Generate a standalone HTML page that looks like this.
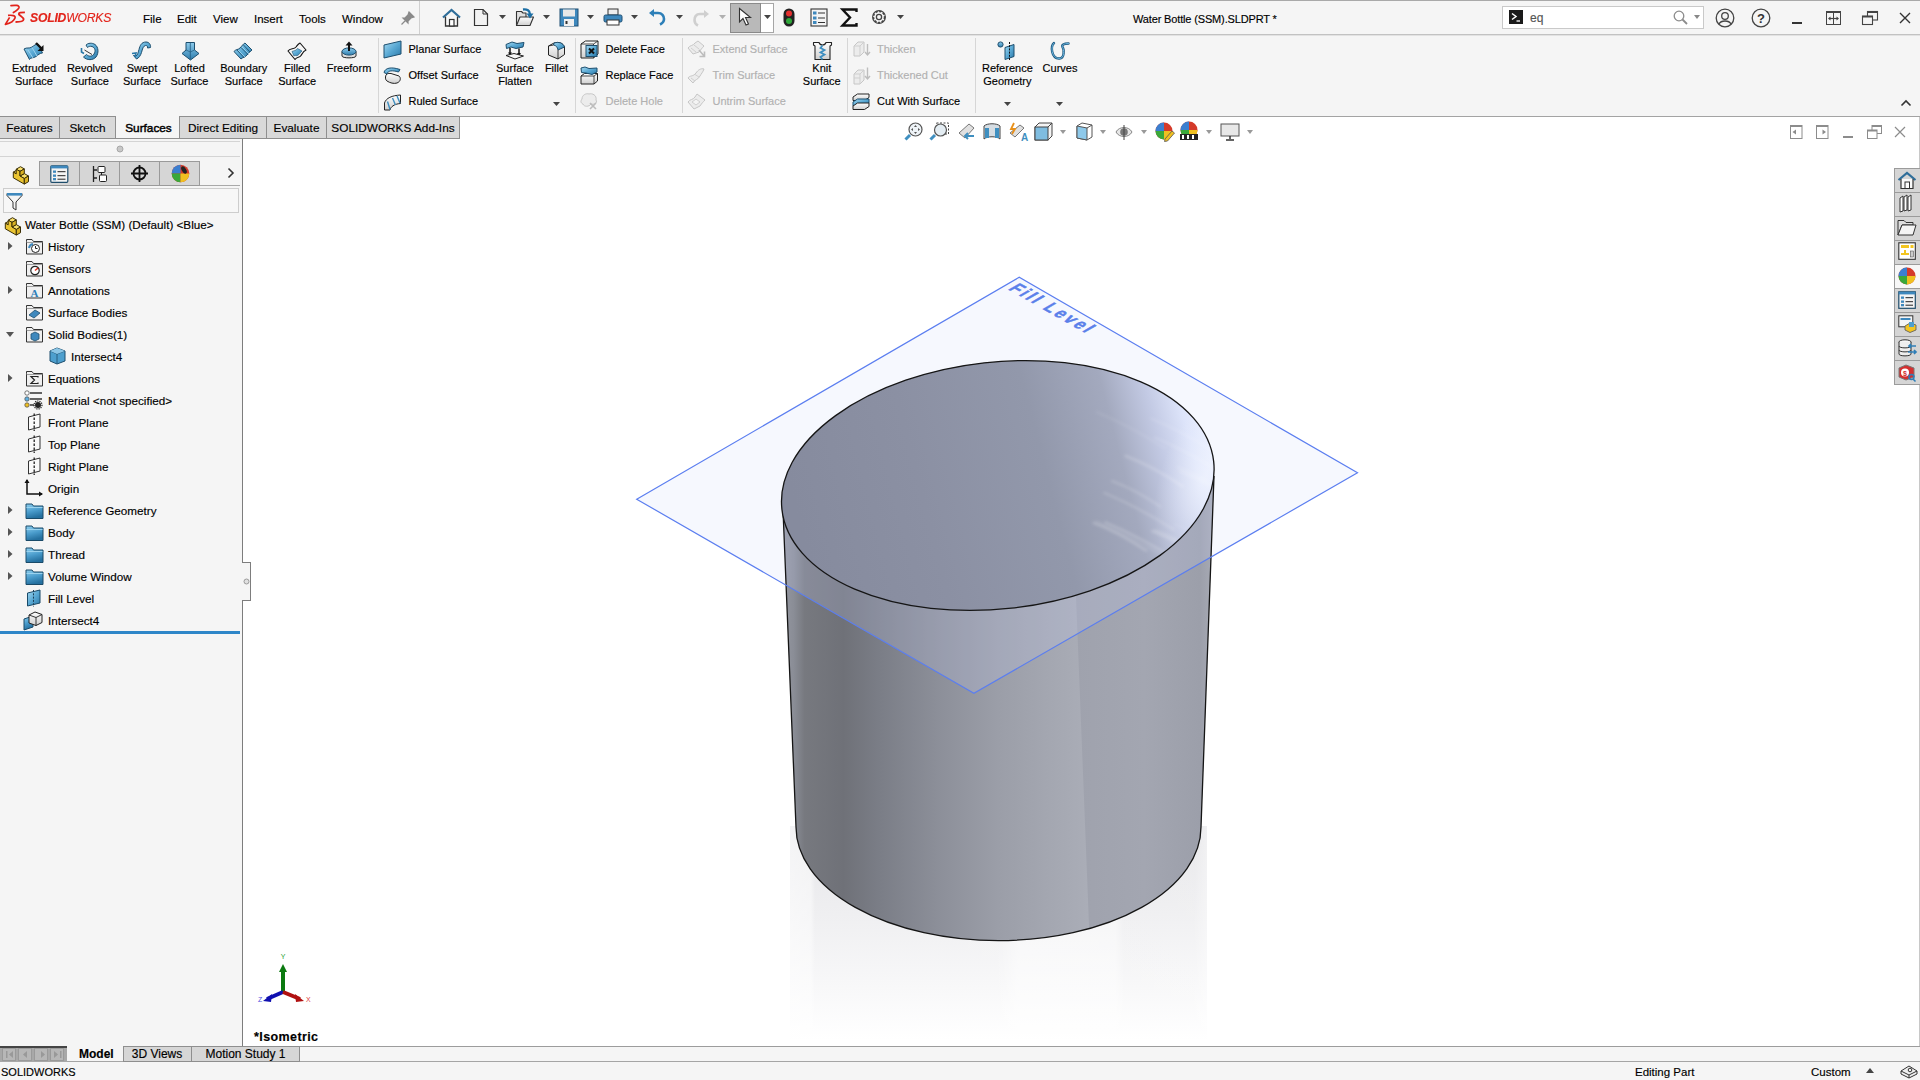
<!DOCTYPE html>
<html><head><meta charset="utf-8">
<style>
*{box-sizing:border-box}
html,body{margin:0;padding:0;width:1920px;height:1080px;overflow:hidden;background:#fff;font-family:"Liberation Sans",sans-serif;color:#000}
.a{position:absolute}
.t{position:absolute;white-space:nowrap;-webkit-text-stroke:0.15px currentColor}
svg{overflow:visible}
</style></head><body>


<svg class="a" style="left:0;top:0" width="1920" height="1080" viewBox="0 0 1920 1080">
<defs>
<linearGradient id="gBody" gradientUnits="userSpaceOnUse" x1="783" y1="0" x2="1214" y2="0">
<stop offset="0" stop-color="#9497a0"/>
<stop offset="0.025" stop-color="#8a8d96"/>
<stop offset="0.05" stop-color="#77797f"/>
<stop offset="0.14" stop-color="#6f7178"/>
<stop offset="0.22" stop-color="#7a7d86"/>
<stop offset="0.36" stop-color="#8c8f99"/>
<stop offset="0.50" stop-color="#9b9ea8"/>
<stop offset="0.62" stop-color="#a4a7b1"/>
<stop offset="0.72" stop-color="#abaeb8"/>
<stop offset="1" stop-color="#abaeb8"/>
</linearGradient>
<linearGradient id="gBodyR" gradientUnits="userSpaceOnUse" x1="1075" y1="0" x2="1214" y2="0">
<stop offset="0" stop-color="#9fa2ad"/>
<stop offset="0.5" stop-color="#a3a6b1"/>
<stop offset="0.9" stop-color="#9c9faa"/>
<stop offset="1" stop-color="#a8abb5"/>
</linearGradient>
<linearGradient id="gTop" gradientUnits="userSpaceOnUse" x1="800" y1="525" x2="1215" y2="465">
<stop offset="0" stop-color="#868b9e"/>
<stop offset="0.3" stop-color="#8b90a3"/>
<stop offset="0.6" stop-color="#9298ab"/>
<stop offset="0.78" stop-color="#a3a9be"/>
<stop offset="0.88" stop-color="#c3cae4"/>
<stop offset="0.95" stop-color="#dde4fa"/>
<stop offset="1" stop-color="#e9eefe"/>
</linearGradient>
<radialGradient id="gHi" gradientUnits="userSpaceOnUse" cx="1205" cy="500" r="90" gradientTransform="translate(1205 500) rotate(25) scale(0.5 1) translate(-1205 -500)">
<stop offset="0" stop-color="#f4f7ff" stop-opacity="0.6"/>
<stop offset="1" stop-color="#eef2ff" stop-opacity="0"/>
</radialGradient>
<linearGradient id="gShadow" gradientUnits="userSpaceOnUse" x1="0" y1="830" x2="0" y2="1040">
<stop offset="0" stop-color="#e6e6e9"/>
<stop offset="0.4" stop-color="#efeff1"/>
<stop offset="0.75" stop-color="#f8f8f9"/>
<stop offset="1" stop-color="#ffffff"/>
</linearGradient>
<linearGradient id="gShadowX" gradientUnits="userSpaceOnUse" x1="790" y1="0" x2="1207" y2="0">
<stop offset="0" stop-color="#fff" stop-opacity="0.55"/>
<stop offset="0.05" stop-color="#fff" stop-opacity="0.45"/>
<stop offset="0.06" stop-color="#fff" stop-opacity="0"/>
<stop offset="0.5" stop-color="#fff" stop-opacity="0.05"/>
<stop offset="0.55" stop-color="#fff" stop-opacity="0.5"/>
<stop offset="0.78" stop-color="#fff" stop-opacity="0.45"/>
<stop offset="0.8" stop-color="#fff" stop-opacity="0.05"/>
<stop offset="0.97" stop-color="#fff" stop-opacity="0.1"/>
<stop offset="1" stop-color="#fff" stop-opacity="0.4"/>
</linearGradient>
<clipPath id="cBody"><path d="M783 510 L796 827 A202.5 113.6 0 0 0 1201 827 L1214 476 Z"/></clipPath>
<clipPath id="cTop"><ellipse cx="997.8" cy="485.5" rx="216" ry="122" transform="rotate(-6.3 997.8 485.5)"/></clipPath>
<filter id="fBlur" x="-20%" y="-20%" width="140%" height="140%"><feGaussianBlur stdDeviation="1.6"/></filter>
</defs>
<rect x="790" y="826" width="417" height="214" fill="url(#gShadow)"/>
<rect x="790" y="826" width="417" height="214" fill="url(#gShadowX)"/>
<polygon points="636.7,499.2 1019.2,277.3 1357.5,472.8 973.9,693.3" fill="#f6f8fe"/>
<g clip-path="url(#cBody)">
<rect x="780" y="470" width="440" height="480" fill="url(#gBody)"/>
<polygon points="1071,470 1220,470 1220,950 1090,950" fill="url(#gBodyR)"/>
<polygon points="636.7,499.2 1019.2,277.3 1357.5,472.8 973.9,693.3" fill="#c4cef4" fill-opacity="0.22"/>
</g>
<path d="M783 510 L796 827 A202.5 113.6 0 0 0 1201 827 L1214 476" fill="none" stroke="#151515" stroke-width="1.3"/>
<polygon points="636.7,499.2 1019.2,277.3 1357.5,472.8 973.9,693.3" fill="none" stroke="#5b7ef0" stroke-width="1.2"/>
<ellipse cx="997.8" cy="485.5" rx="217.2" ry="123.4" transform="rotate(-6.3 997.8 485.5)" fill="url(#gTop)" stroke="#151515" stroke-width="1.3"/>
<ellipse cx="997.8" cy="485.5" rx="216" ry="122" transform="rotate(-6.3 997.8 485.5)" fill="url(#gHi)"/>
<g clip-path="url(#cTop)"><g filter="url(#fBlur)"><path d="M1111.4 480.7 Q1136.3 489.9 1161.1 507.1" stroke="#ffffff" stroke-opacity="0.23" stroke-width="1.7" fill="none"/><path d="M1095.9 411.7 Q1130.7 426.1 1165.5 448.6" stroke="#ffffff" stroke-opacity="0.17" stroke-width="1.1" fill="none"/><path d="M1179.6 471.1 Q1214.4 485.5 1249.2 508.0" stroke="#ffffff" stroke-opacity="0.21" stroke-width="1.7" fill="none"/><path d="M1103.6 492.5 Q1139.0 507.3 1174.4 530.1" stroke="#ffffff" stroke-opacity="0.21" stroke-width="1.8" fill="none"/><path d="M1150.4 418.3 Q1183.5 431.9 1216.7 453.4" stroke="#ffffff" stroke-opacity="0.23" stroke-width="1.2" fill="none"/><path d="M1092.8 522.5 Q1119.8 532.8 1146.9 551.2" stroke="#ffffff" stroke-opacity="0.25" stroke-width="2.0" fill="none"/><path d="M1154.3 529.7 Q1179.7 539.2 1205.1 556.6" stroke="#ffffff" stroke-opacity="0.26" stroke-width="1.4" fill="none"/><path d="M1174.2 524.3 Q1193.3 530.3 1212.3 544.4" stroke="#ffffff" stroke-opacity="0.14" stroke-width="1.1" fill="none"/><path d="M1176.9 466.7 Q1207.2 478.8 1237.5 498.8" stroke="#ffffff" stroke-opacity="0.17" stroke-width="1.5" fill="none"/><path d="M1124.7 455.6 Q1154.2 467.2 1183.6 486.8" stroke="#ffffff" stroke-opacity="0.23" stroke-width="2.1" fill="none"/><path d="M1151.4 530.8 Q1186.6 545.4 1221.8 568.0" stroke="#ffffff" stroke-opacity="0.30" stroke-width="1.7" fill="none"/><path d="M1104.7 521.9 Q1142.2 537.7 1179.7 561.6" stroke="#ffffff" stroke-opacity="0.28" stroke-width="1.6" fill="none"/><path d="M1154.2 437.4 Q1188.9 451.8 1223.6 474.2" stroke="#ffffff" stroke-opacity="0.22" stroke-width="1.2" fill="none"/><path d="M1095.7 521.0 Q1133.7 537.1 1171.8 561.3" stroke="#ffffff" stroke-opacity="0.14" stroke-width="1.9" fill="none"/></g></g>
<text transform="matrix(0.8706 0.4915 -1.06 0.612 1007.6 289.2)" font-family="Liberation Sans" font-size="15.6" font-weight="bold" fill="#5b80ea" stroke="#5b80ea" stroke-width="0.45" letter-spacing="2.5">Fill Level</text>
</svg>

<div class="a" style="left:0px;top:0px;width:1920px;height:35px;background:#f5f5f5;border-top:1px solid #a9a9a9;border-bottom:1px solid #c2c2c2"></div>
<svg class="a" style="left:0px;top:0px" width="32" height="28" viewBox="0 0 32 28"><path d="M11 5.6 C15 5.2 19.5 5 19 7.5 C18.5 9.5 16 11 13.4 12.5" fill="none" stroke="#e2231a" stroke-width="1.7" stroke-linecap="round"/><path d="M8 15.4 C12 15 16 15.5 15 18 C14 21 9 23.5 5.4 24.4 L9.6 17.4" fill="none" stroke="#e2231a" stroke-width="1.7" stroke-linejoin="round"/><path d="M24.9 12.4 C21 12.4 18.6 12.6 18.8 14 C19 15.5 23.8 17 23.6 19.5 C23.4 21.8 19 22 15.5 22" fill="none" stroke="#e2231a" stroke-width="1.8"/></svg>
<div class="t" style="left:30px;top:11.3px;font-size:12.6px;line-height:14px;color:#e2231a;font-style:italic;letter-spacing:-0.2px;transform:scaleX(0.965);transform-origin:0 0"><b>SOLID</b>WORKS</div>
<div class="t" style="left:143px;top:13.31px;font-size:11.5px;line-height:13.22px;color:#000;font-weight:normal;">File</div>
<div class="t" style="left:177px;top:13.31px;font-size:11.5px;line-height:13.22px;color:#000;font-weight:normal;">Edit</div>
<div class="t" style="left:213px;top:13.31px;font-size:11.5px;line-height:13.22px;color:#000;font-weight:normal;">View</div>
<div class="t" style="left:254px;top:13.31px;font-size:11.5px;line-height:13.22px;color:#000;font-weight:normal;">Insert</div>
<div class="t" style="left:299px;top:13.31px;font-size:11.5px;line-height:13.22px;color:#000;font-weight:normal;">Tools</div>
<div class="t" style="left:342px;top:13.31px;font-size:11.5px;line-height:13.22px;color:#000;font-weight:normal;">Window</div>
<svg class="a" style="left:400px;top:10px" width="16" height="16" viewBox="0 0 16 16"><path d="M9 2 L14 7 L11 8 L8 11 L8 13 L3 8 L5 8 L8 5 Z M5.5 10.5 L1.5 14.5" fill="#8a8a8a" stroke="#8a8a8a" stroke-width="1.2"/></svg>
<div class="a" style="left:419px;top:1px;width:1px;height:33px;background:#d0d0d0"></div>
<svg class="a" style="left:441px;top:8px" width="21" height="20" viewBox="0 0 21 20"><path d="M2 9.5 L10.5 2 L19 9.5" fill="none" stroke="#2f6e9a" stroke-width="2.2"/><path d="M4.5 8.5 V18 H16.5 V8.5" fill="#f8f8f8" stroke="#333" stroke-width="1.3"/><rect x="8.5" y="11.5" width="4.5" height="6.5" fill="#fff" stroke="#333" stroke-width="1.2"/></svg>
<svg class="a" style="left:473px;top:8px" width="16" height="19" viewBox="0 0 16 19"><path d="M1.5 1.5 H10 L14.5 6 V17.5 H1.5 Z" fill="#f2f2f2" stroke="#333" stroke-width="1.2"/><path d="M10 1.5 V6 H14.5" fill="none" stroke="#333" stroke-width="1"/></svg>
<svg class="a" style="left:499.0px;top:15px" width="7" height="4" viewBox="0 0 7 4"><polygon points="0,0 7,0 3.5,4" fill="#444"/></svg>
<svg class="a" style="left:515px;top:8px" width="20" height="19" viewBox="0 0 20 19"><path d="M1.5 3.5 H6.5 L8 5 H11 V17.5 H1.5 Z" fill="#e0e0e0" stroke="#333" stroke-width="1.1" stroke-linejoin="round"/><path d="M5 9 H18.5 L15 17.5 H1.5 Z" fill="url(#gw)" stroke="#333" stroke-width="1.1" stroke-linejoin="round"/><path d="M8 1.5 C12 1 15 2.5 15 6.5" fill="none" stroke="#1d6fa5" stroke-width="2.4"/><polygon points="11.5,5.5 18.5,5.5 15,10.5" fill="#1d6fa5"/></svg>
<svg class="a" style="left:542.5px;top:15px" width="7" height="4" viewBox="0 0 7 4"><polygon points="0,0 7,0 3.5,4" fill="#444"/></svg>
<svg class="a" style="left:559px;top:8px" width="20" height="19" viewBox="0 0 20 19"><rect x="1" y="1" width="18" height="17" fill="#3e88bd" stroke="#1f4f73" stroke-width="1"/><rect x="4" y="1.5" width="12" height="7" fill="#e8e8e8"/><rect x="5" y="11" width="10" height="7" fill="#f0f0f0"/><rect x="6.5" y="13" width="2" height="3" fill="#333"/></svg>
<svg class="a" style="left:587.0px;top:15px" width="7" height="4" viewBox="0 0 7 4"><polygon points="0,0 7,0 3.5,4" fill="#444"/></svg>
<svg class="a" style="left:603px;top:8px" width="20" height="19" viewBox="0 0 20 19"><rect x="5" y="1" width="10" height="6" fill="#eee" stroke="#333"/><rect x="1" y="7" width="18" height="7" rx="1.5" fill="#3e88bd" stroke="#1f4f73"/><rect x="4" y="12" width="12" height="5" fill="#fff" stroke="#333"/></svg>
<svg class="a" style="left:630.5px;top:15px" width="7" height="4" viewBox="0 0 7 4"><polygon points="0,0 7,0 3.5,4" fill="#444"/></svg>
<svg class="a" style="left:648px;top:8px" width="18" height="18" viewBox="0 0 18 18"><path d="M4 5 H10 C14 5 16 8 16 11 C16 14 14 15.5 12 16.5" fill="none" stroke="#2d7fb8" stroke-width="2.6"/><polygon points="1,5 6,1 6,9" fill="#2d7fb8"/></svg>
<svg class="a" style="left:675.5px;top:15px" width="7" height="4" viewBox="0 0 7 4"><polygon points="0,0 7,0 3.5,4" fill="#444"/></svg>
<svg class="a" style="left:693px;top:9px" width="17" height="17" viewBox="0 0 17 17"><path d="M13 5 H7 C3 5 1.5 8 1.5 11 C1.5 14 3 15.5 5 16.5" fill="none" stroke="#cfcfcf" stroke-width="2.6"/><polygon points="16,5 11,1 11,9" fill="#cfcfcf"/></svg>
<svg class="a" style="left:719.0px;top:15px" width="7" height="4" viewBox="0 0 7 4"><polygon points="0,0 7,0 3.5,4" fill="#b0b0b0"/></svg>
<div class="a" style="left:730px;top:3px;width:44px;height:30px;background:#fff;border:1px solid #a6a6a6"></div>
<div class="a" style="left:730px;top:3px;width:31px;height:30px;background:#b9b9b9;border:1px solid #8a8a8a"></div>
<svg class="a" style="left:738px;top:7px" width="14" height="20" viewBox="0 0 14 20"><path d="M1.5 1.5 L1.5 15 L5 11.5 L8 18 L10.5 17 L7.5 10.5 L12.5 10.5 Z" fill="#fff" stroke="#333" stroke-width="1.1"/></svg>
<svg class="a" style="left:763.5px;top:15px" width="7" height="4" viewBox="0 0 7 4"><polygon points="0,0 7,0 3.5,4" fill="#444"/></svg>
<svg class="a" style="left:783px;top:8px" width="12" height="19" viewBox="0 0 12 19"><rect x="0.5" y="0.5" width="11" height="18" rx="5.5" fill="#222"/><circle cx="6" cy="5.5" r="3" fill="#e53030"/><circle cx="6" cy="13" r="3" fill="#2fa83a"/></svg>
<svg class="a" style="left:810px;top:8px" width="18" height="19" viewBox="0 0 18 19"><rect x="1" y="1" width="16" height="17" fill="#f4f4f4" stroke="#333" stroke-width="1.1"/><rect x="3" y="3.5" width="3.5" height="3" fill="#3e88bd"/><rect x="3" y="8.5" width="3.5" height="3" fill="#3e88bd"/><rect x="3" y="13" width="3.5" height="3" fill="#3e88bd"/><path d="M8 5 H15 M8 10 H15 M8 14.5 H15" stroke="#333" stroke-width="1.2"/></svg>
<svg class="a" style="left:841px;top:8px" width="17" height="19" viewBox="0 0 17 19"><path d="M15.5 4 V1.5 H1.5 L9 9.5 L1.5 17.5 H15.5 V15" fill="none" stroke="#111" stroke-width="2.4"/></svg>
<svg class="a" style="left:870px;top:8px" width="18" height="18" viewBox="0 0 18 18"><circle cx="9" cy="9" r="5.6" fill="none" stroke="#444" stroke-width="1.6" stroke-dasharray="2.2 1.5"/><circle cx="9" cy="9" r="6.4" fill="none" stroke="#444" stroke-width="1.1"/><circle cx="9" cy="9" r="2.6" fill="none" stroke="#444" stroke-width="1.3"/></svg>
<svg class="a" style="left:896.5px;top:15px" width="7" height="4" viewBox="0 0 7 4"><polygon points="0,0 7,0 3.5,4" fill="#444"/></svg>
<div class="t" style="left:1133px;top:13.06px;font-size:11px;line-height:12.65px;color:#000;font-weight:normal;letter-spacing:-0.15px">Water Bottle (SSM).SLDPRT *</div>
<div class="a" style="left:1502px;top:6px;width:202px;height:23px;background:#fff;border:1px solid #c9c9c9"></div>
<svg class="a" style="left:1509px;top:10px" width="14" height="14" viewBox="0 0 14 14"><rect width="14" height="14" fill="#1a1a1a"/><path d="M3 3.5 L7 6.5 L3 9.5" fill="none" stroke="#fff" stroke-width="1.5"/><path d="M7.5 11 H11" stroke="#fff" stroke-width="1.3"/></svg>
<div class="t" style="left:1530px;top:12.14px;font-size:12px;line-height:13.8px;color:#555;font-weight:normal;">eq</div>
<svg class="a" style="left:1673px;top:10px" width="15" height="15" viewBox="0 0 15 15"><circle cx="6" cy="6" r="4.8" fill="none" stroke="#8c8c8c" stroke-width="1.3"/><path d="M9.5 9.5 L14 14" stroke="#8c8c8c" stroke-width="1.8"/></svg>
<svg class="a" style="left:1694.0px;top:15px" width="6" height="4" viewBox="0 0 6 4"><polygon points="0,0 6,0 3.0,4" fill="#888"/></svg>
<svg class="a" style="left:1715px;top:8px" width="20" height="20" viewBox="0 0 20 20"><circle cx="10" cy="10" r="8.8" fill="none" stroke="#444" stroke-width="1.3"/><circle cx="10" cy="8" r="3.3" fill="none" stroke="#444" stroke-width="1.3"/><path d="M4 16 C6 12 14 12 16 16" fill="none" stroke="#444" stroke-width="1.3"/></svg>
<svg class="a" style="left:1751px;top:8px" width="20" height="20" viewBox="0 0 20 20"><circle cx="10" cy="10" r="8.8" fill="none" stroke="#444" stroke-width="1.3"/><text x="10" y="14.5" text-anchor="middle" font-family="Liberation Sans" font-size="13" font-weight="bold" fill="#333">?</text></svg>
<div class="a" style="left:1792px;top:22px;width:10px;height:2px;background:#333"></div>
<svg class="a" style="left:1826px;top:11px" width="15" height="14" viewBox="0 0 15 14"><rect x="0.5" y="0.5" width="14" height="13" fill="none" stroke="#444" stroke-width="1"/><rect x="0.5" y="0.5" width="14" height="1.5" fill="#444"/><path d="M7.5 2 V13.5" stroke="#444"/><path d="M3 7.5 H12" stroke="#444" stroke-width="1.2"/><polygon points="2,7.5 4.5,5.5 4.5,9.5" fill="#444"/><polygon points="13,7.5 10.5,5.5 10.5,9.5" fill="#444"/></svg>
<svg class="a" style="left:1862px;top:11px" width="16" height="14" viewBox="0 0 16 14"><rect x="5.5" y="0.5" width="10" height="8.5" fill="none" stroke="#444" stroke-width="1.1"/><rect x="5.5" y="0.5" width="10" height="1.5" fill="#444"/><rect x="0.5" y="5" width="10" height="8.5" fill="#f5f5f5" stroke="#444" stroke-width="1.1"/><rect x="0.5" y="5" width="10" height="1.5" fill="#444"/></svg>
<svg class="a" style="left:1899px;top:12px" width="12" height="12" viewBox="0 0 12 12"><path d="M1 1 L11 11 M11 1 L1 11" stroke="#333" stroke-width="1.4"/></svg>
<div class="a" style="left:0px;top:35px;width:1920px;height:82px;background:#f5f5f5;border-top:1px solid #e2e2e2;border-bottom:1px solid #a3a3a3"></div>
<div class="a" style="left:116px;top:116px;width:66px;height:23px;background:#f5f5f5"></div>
<div class="a" style="left:378px;top:38px;width:1px;height:75px;background:#d6d6d6"></div>
<div class="a" style="left:575px;top:38px;width:1px;height:75px;background:#d6d6d6"></div>
<div class="a" style="left:682px;top:38px;width:1px;height:75px;background:#d6d6d6"></div>
<div class="a" style="left:847px;top:38px;width:1px;height:75px;background:#d6d6d6"></div>
<div class="a" style="left:975px;top:38px;width:1px;height:75px;background:#d6d6d6"></div>
<div class="t" style="left:-66px;width:200px;text-align:center;top:62.36px;font-size:11px;line-height:12.65px;color:#000;font-weight:normal;">Extruded</div>
<div class="t" style="left:-66px;width:200px;text-align:center;top:75.46px;font-size:11px;line-height:12.65px;color:#000;font-weight:normal;">Surface</div>
<div class="t" style="left:-10.200000000000003px;width:200px;text-align:center;top:62.36px;font-size:11px;line-height:12.65px;color:#000;font-weight:normal;">Revolved</div>
<div class="t" style="left:-10.200000000000003px;width:200px;text-align:center;top:75.46px;font-size:11px;line-height:12.65px;color:#000;font-weight:normal;">Surface</div>
<div class="t" style="left:42px;width:200px;text-align:center;top:62.36px;font-size:11px;line-height:12.65px;color:#000;font-weight:normal;">Swept</div>
<div class="t" style="left:42px;width:200px;text-align:center;top:75.46px;font-size:11px;line-height:12.65px;color:#000;font-weight:normal;">Surface</div>
<div class="t" style="left:89.5px;width:200px;text-align:center;top:62.36px;font-size:11px;line-height:12.65px;color:#000;font-weight:normal;">Lofted</div>
<div class="t" style="left:89.5px;width:200px;text-align:center;top:75.46px;font-size:11px;line-height:12.65px;color:#000;font-weight:normal;">Surface</div>
<div class="t" style="left:143.7px;width:200px;text-align:center;top:62.36px;font-size:11px;line-height:12.65px;color:#000;font-weight:normal;">Boundary</div>
<div class="t" style="left:143.7px;width:200px;text-align:center;top:75.46px;font-size:11px;line-height:12.65px;color:#000;font-weight:normal;">Surface</div>
<div class="t" style="left:197.2px;width:200px;text-align:center;top:62.36px;font-size:11px;line-height:12.65px;color:#000;font-weight:normal;">Filled</div>
<div class="t" style="left:197.2px;width:200px;text-align:center;top:75.46px;font-size:11px;line-height:12.65px;color:#000;font-weight:normal;">Surface</div>
<div class="t" style="left:249px;width:200px;text-align:center;top:62.36px;font-size:11px;line-height:12.65px;color:#000;font-weight:normal;">Freeform</div>
<div class="t" style="left:415px;width:200px;text-align:center;top:62.16px;font-size:11px;line-height:12.65px;color:#000;font-weight:normal;">Surface</div>
<div class="t" style="left:415px;width:200px;text-align:center;top:75.16px;font-size:11px;line-height:12.65px;color:#000;font-weight:normal;">Flatten</div>
<div class="t" style="left:456.5px;width:200px;text-align:center;top:62.16px;font-size:11px;line-height:12.65px;color:#000;font-weight:normal;">Fillet</div>
<div class="t" style="left:721.8px;width:200px;text-align:center;top:61.76px;font-size:11px;line-height:12.65px;color:#000;font-weight:normal;">Knit</div>
<div class="t" style="left:721.8px;width:200px;text-align:center;top:74.86px;font-size:11px;line-height:12.65px;color:#000;font-weight:normal;">Surface</div>
<div class="t" style="left:907.4px;width:200px;text-align:center;top:62.36px;font-size:11px;line-height:12.65px;color:#000;font-weight:normal;">Reference</div>
<div class="t" style="left:907.4px;width:200px;text-align:center;top:75.46px;font-size:11px;line-height:12.65px;color:#000;font-weight:normal;">Geometry</div>
<div class="t" style="left:960px;width:200px;text-align:center;top:62.36px;font-size:11px;line-height:12.65px;color:#000;font-weight:normal;">Curves</div>
<svg width="0" height="0" style="position:absolute"><defs><linearGradient id="gb" x1="0" y1="0" x2="1" y2="1"><stop offset="0" stop-color="#a6daf2"/><stop offset="0.5" stop-color="#5aa9d4"/><stop offset="1" stop-color="#2a78a8"/></linearGradient><linearGradient id="gb2" x1="0" y1="0" x2="0" y2="1"><stop offset="0" stop-color="#8ccbec"/><stop offset="1" stop-color="#2f7eae"/></linearGradient><linearGradient id="gw" x1="0" y1="0" x2="0" y2="1"><stop offset="0" stop-color="#ffffff"/><stop offset="1" stop-color="#cfcfcf"/></linearGradient></defs></svg>
<svg class="a" style="left:23px;top:41px" width="22" height="20" viewBox="0 0 22 20"><path d="M1 8 C4 6 6 8 9 6 C11 4.5 13 3 15 3 L19.5 12 C17 12 15 14 13 15.5 C10 17.5 8 16 6.5 18.5 Z" fill="url(#gb)" stroke="#1d4f6f" stroke-width="1" stroke-linejoin="round"/><path d="M5 9 L10 17 M9 6.5 L14 15" stroke="#9fd3ee" stroke-width="1"/><path d="M13 2 L18.5 7.5" stroke="#111" stroke-width="2.4"/><polygon points="20.5,4 20.5,10 14.5,10" fill="#111"/></svg>
<svg class="a" style="left:80px;top:42px" width="20" height="19" viewBox="0 0 20 19"><path d="M6 3 C8 1 12 0.5 15 2.5 C18.5 5 19 11 16 15 C13 18.5 7 18.5 3.5 15 L6.5 12.5 C9 15 12.5 14.5 14 12 C16 9 15 5.5 12 4.5 C10 4 8.5 4.5 7.5 5.5 Z" fill="url(#gb)" stroke="#1d4f6f" stroke-width="1" stroke-linejoin="round"/><path d="M1.5 6 L1.5 10 L4 11.5" fill="none" stroke="#2a78a8" stroke-width="1.6"/><path d="M4.5 8 L12 12.5" stroke="#222" stroke-width="0.9"/></svg>
<svg class="a" style="left:131px;top:41px" width="21" height="20" viewBox="0 0 21 20"><path d="M2.5 14.5 L5.5 18 C8 17 9.5 14.5 10.5 11.5 C11.5 8 12 5 14.5 4.5 C16 4.3 17 5.5 16.5 7 L19.5 6.5 C20 3.5 18 1 15 1 C10.5 1 9 4.5 8 8.5 C7 12 6.5 14 5 15 Z" fill="url(#gb)" stroke="#1d4f6f" stroke-width="1" stroke-linejoin="round"/><path d="M1 12.5 L5 12 L4 16" fill="none" stroke="#2a78a8" stroke-width="1.6"/></svg>
<svg class="a" style="left:181px;top:41px" width="19" height="20" viewBox="0 0 19 20"><path d="M5 1.5 L13.5 1.5 L13.5 9 L18 12.5 L9.5 19 L1 12.5 L5 9 Z" fill="url(#gb2)" stroke="#1d4f6f" stroke-width="1" stroke-linejoin="round"/><path d="M9.3 2 V18.5" stroke="#1f5a80" stroke-width="0.8"/><path d="M5 9 L9.3 11 L13.5 9" fill="none" stroke="#1f5a80" stroke-width="0.7"/></svg>
<svg class="a" style="left:233px;top:42px" width="20" height="18" viewBox="0 0 20 18"><path d="M1 9.5 C3 7 5 8 7 6 C9 4 10 2 12 1 L19 8 C17 9.5 15.5 11 14 13 C12 15.5 10 15 8 17 Z" fill="url(#gb)" stroke="#1d4f6f" stroke-width="1" stroke-linejoin="round"/><path d="M4 8 L11 15.5 M8 5.5 L15 12.5 M10.5 3 L17 10" stroke="#1d4f6f" stroke-width="0.9"/><path d="M5 8 L12 15 M9 5 L16 12" stroke="#a6daf2" stroke-width="0.8"/></svg>
<svg class="a" style="left:287px;top:42px" width="20" height="18" viewBox="0 0 20 18"><path d="M1 9 C3 6 7 7.5 9 5 C10.5 3 11 2 13 1 L19 8 C16.5 9 15.5 11 14 13.5 C12.5 16 10 14.5 8 17.5 Z" fill="#f6f6f6" stroke="#111" stroke-width="1.1" stroke-linejoin="round"/><path d="M5 9.5 C7 8.5 9 9 10.5 6.5 L15 9 C13 10.5 12.5 12.5 10.5 13.5 C9 14 8 13 7 14 Z" fill="url(#gb)" stroke="#1d4f6f" stroke-width="0.6"/></svg>
<svg class="a" style="left:341px;top:41px" width="16" height="20" viewBox="0 0 16 20"><path d="M1 10.5 V15 C1 17.5 15 17.5 15 15 V10.5" fill="url(#gw)" stroke="#222" stroke-width="1"/><ellipse cx="8" cy="10.5" rx="7" ry="3.6" fill="url(#gb2)" stroke="#1d4f6f" stroke-width="1" stroke-linejoin="round"/><path d="M8 10 V3.5" stroke="#111" stroke-width="2"/><polygon points="4.5,4.5 11.5,4.5 8,0.5" fill="#111"/></svg>
<svg class="a" style="left:505px;top:41px" width="20" height="19" viewBox="0 0 20 19"><path d="M1 3.5 L7 1 L12 2.5 L19 1.5 L18 6 L11 7.5 L6 6 L1.5 7.5 Z" fill="url(#gb)" stroke="#1d4f6f" stroke-width="1" stroke-linejoin="round"/><path d="M5 7 V13 M14 7.5 V13.5" stroke="#111" stroke-width="1.5"/><polygon points="3,11.5 7,11.5 5,14.5" fill="#111"/><polygon points="12,12 16,12 14,15" fill="#111"/><path d="M1 14.5 L9 12.5 L18.5 15 L10 18 Z" fill="#f6f6f6" stroke="#222" stroke-width="1" stroke-linejoin="round"/></svg>
<svg class="a" style="left:547px;top:41px" width="19" height="19" viewBox="0 0 19 19"><path d="M1.5 5 L7 2 C12 0.5 16 2 17.5 6 V13.5 L11 18 L1.5 14 Z" fill="url(#gw)" stroke="#222" stroke-width="1" stroke-linejoin="round"/><path d="M7 2 C12 0.5 16 2 17.5 6 L11 9 C10.5 6 9 4.5 6.5 4 Z" fill="url(#gb)" stroke="#1d4f6f" stroke-width="1" stroke-linejoin="round"/><path d="M1.5 5 L6.5 4 M11 9 V18" stroke="#222" stroke-width="0.9"/></svg>
<svg class="a" style="left:812px;top:41px" width="21" height="20" viewBox="0 0 21 20"><path d="M1.5 1.5 H7 C7.5 3 8.5 4 10.5 4 C12.5 4 13.5 3 14 1.5 H19.5 V4 L18 5 V18.5 H3 V5 L1.5 4 Z" fill="url(#gw)" stroke="#222" stroke-width="1.1" stroke-linejoin="round"/><path d="M10.5 4.5 L8.5 7 L12.5 9 L8.5 11.5 L12.5 13.5 L8.5 16 L10.5 18.5" fill="none" stroke="#3d8ec0" stroke-width="1.8"/></svg>
<svg class="a" style="left:997px;top:41px" width="20" height="20" viewBox="0 0 20 20"><circle cx="3.5" cy="3.5" r="2.6" fill="url(#gb2)" stroke="#1f4f6e"/><path d="M8 6.5 L17 3.5 V15.5 L8 18.5 Z" fill="url(#gb)" stroke="#1d4f6f" stroke-width="1" stroke-linejoin="round"/><path d="M12.5 1 V20" stroke="#111" stroke-width="1" stroke-dasharray="2 1.2"/></svg>
<svg class="a" style="left:1050px;top:41px" width="20" height="20" viewBox="0 0 20 20"><path d="M4 2 C0.5 5 1 17 9 17.5 C15 18 14 8 12.5 6 C11.5 4 13.5 2.5 18.5 2.5" fill="none" stroke="#1f5a80" stroke-width="2.4" stroke-linecap="round"/><path d="M4 2 C0.5 5 1 17 9 17.5 C15 18 14 8 12.5 6 C11.5 4 13.5 2.5 18.5 2.5" fill="none" stroke="#6ab4de" stroke-width="1" stroke-linecap="round"/></svg>
<svg class="a" style="left:553.0px;top:101.5px" width="7" height="4" viewBox="0 0 7 4"><polygon points="0,0 7,0 3.5,4" fill="#444"/></svg>
<svg class="a" style="left:1003.9px;top:101.5px" width="7" height="4" viewBox="0 0 7 4"><polygon points="0,0 7,0 3.5,4" fill="#444"/></svg>
<svg class="a" style="left:1055.8px;top:101.5px" width="7" height="4" viewBox="0 0 7 4"><polygon points="0,0 7,0 3.5,4" fill="#444"/></svg>
<div class="t" style="left:408.5px;top:43.46px;font-size:11px;line-height:12.65px;color:#000;font-weight:normal;">Planar Surface</div>
<div class="t" style="left:408.5px;top:69.46px;font-size:11px;line-height:12.65px;color:#000;font-weight:normal;">Offset Surface</div>
<div class="t" style="left:408.5px;top:95.46px;font-size:11px;line-height:12.65px;color:#000;font-weight:normal;">Ruled Surface</div>
<div class="t" style="left:605.5px;top:43.46px;font-size:11px;line-height:12.65px;color:#000;font-weight:normal;">Delete Face</div>
<div class="t" style="left:605.5px;top:69.46px;font-size:11px;line-height:12.65px;color:#000;font-weight:normal;">Replace Face</div>
<div class="t" style="left:605.5px;top:95.46px;font-size:11px;line-height:12.65px;color:#b1b1b1;font-weight:normal;">Delete Hole</div>
<div class="t" style="left:712.5px;top:43.46px;font-size:11px;line-height:12.65px;color:#b1b1b1;font-weight:normal;">Extend Surface</div>
<div class="t" style="left:712.5px;top:69.46px;font-size:11px;line-height:12.65px;color:#b1b1b1;font-weight:normal;">Trim Surface</div>
<div class="t" style="left:712.5px;top:95.46px;font-size:11px;line-height:12.65px;color:#b1b1b1;font-weight:normal;">Untrim Surface</div>
<div class="t" style="left:877px;top:43.46px;font-size:11px;line-height:12.65px;color:#b1b1b1;font-weight:normal;">Thicken</div>
<div class="t" style="left:877px;top:69.46px;font-size:11px;line-height:12.65px;color:#b1b1b1;font-weight:normal;">Thickened Cut</div>
<div class="t" style="left:877px;top:95.46px;font-size:11px;line-height:12.65px;color:#000;font-weight:normal;">Cut With Surface</div>
<svg class="a" style="left:383px;top:40px" width="19" height="19" viewBox="0 0 19 19"><path d="M1 5 L18 1 V14 L1 18 Z" fill="url(#gb)" stroke="#1d4f6f" stroke-width="1" stroke-linejoin="round"/></svg>
<svg class="a" style="left:383px;top:66px" width="19" height="19" viewBox="0 0 19 19"><path d="M2.5 11 C2.5 8 5 7 8 7.5 L16 10 C18 11.5 18 15.5 14 17 C11 18 7 17 4 15 C2.5 14 2.5 12.5 2.5 11 Z" fill="url(#gw)" stroke="#222" stroke-width="1"/><path d="M1 6.5 C2 2 8 0.5 17 3.5 L15.5 6 C9 4 5 4.5 4 8 Z" fill="url(#gb)" stroke="#1d4f6f" stroke-width="1" stroke-linejoin="round"/></svg>
<svg class="a" style="left:383px;top:92px" width="19" height="19" viewBox="0 0 19 19"><path d="M1.5 11 V18 H7 C7.5 15 11 12 17.5 11.5 V3 C9 3.5 3 6 1.5 11 Z" fill="url(#gw)" stroke="#222" stroke-width="1" stroke-linejoin="round"/><path d="M4.5 9.5 L7 17.5 M9.5 6 L12.5 13 M14 4 L17 11" stroke="#3d8ec0" stroke-width="1.4"/></svg>
<svg class="a" style="left:580px;top:40px" width="19" height="19" viewBox="0 0 19 19"><path d="M1 4 L5.5 1 H18 V14 L13.5 18 H1 Z" fill="url(#gw)" stroke="#222" stroke-linejoin="round"/><path d="M1 4 H13.5 V18 M13.5 4 L18 1" fill="none" stroke="#222" stroke-width="0.8"/><rect x="6" y="5.5" width="11" height="11" fill="url(#gb)" stroke="#1f4f6e"/><path d="M9 8.5 L14 13.5 M14 8.5 L9 13.5" stroke="#111" stroke-width="2"/></svg>
<svg class="a" style="left:580px;top:66px" width="19" height="19" viewBox="0 0 19 19"><path d="M1 10 L4.5 7.5 H17.5 V15 L14 18 H1 Z" fill="url(#gw)" stroke="#222" stroke-linejoin="round"/><path d="M1 10 H14 V18 M14 10 L17.5 7.5" fill="none" stroke="#222" stroke-width="0.8"/><path d="M1 2 L5 1 L9 2.5 L17 2 V6 L12 8.5 L6 7 L1.5 6.5 Z" fill="url(#gb)" stroke="#1d4f6f" stroke-width="1" stroke-linejoin="round"/></svg>
<svg class="a" style="left:580px;top:92px" width="19" height="19" viewBox="0 0 19 19"><path d="M2 7 C2 3 6 1 9 2 C12 1 17 3 16 8 C18 11 14 13 11 12 C9 15 4 15 3 12 C0.5 11 0.5 9 2 7 Z" fill="#ececec" stroke="#c6c6c6" stroke-width="1" stroke-linejoin="round"/><path d="M10 11 L16 17 M16 11 L10 17" stroke="#bdbdbd" stroke-width="1.6"/></svg>
<svg class="a" style="left:687px;top:40px" width="19" height="19" viewBox="0 0 19 19"><path d="M1 8 C3 5 6 6 8 3 L11 1 L17 6 C15 8 14 9.5 12 12 L6 14 Z" fill="#ececec" stroke="#c6c6c6" stroke-width="1" stroke-linejoin="round"/><path d="M4 8 L9 12 M7 5 L12 9" stroke="#d0d0d0"/><path d="M12 10 L17.5 16.5 M17.5 11.5 V16.5 H12.5" fill="none" stroke="#bdbdbd" stroke-width="1.6"/></svg>
<svg class="a" style="left:687px;top:66px" width="19" height="19" viewBox="0 0 19 19"><path d="M1 12 C3 9 6 11 9 7 C11 4 14 2 17 3 C16 6 14 8 13 10 C11 14 8 13 6 17 Z" fill="#ececec" stroke="#c6c6c6" stroke-width="1" stroke-linejoin="round"/><path d="M4 12 L8 15 M8 8.5 L12 11" stroke="#d0d0d0"/></svg>
<svg class="a" style="left:687px;top:92px" width="19" height="19" viewBox="0 0 19 19"><path d="M1 10 C3 7 6 8 8 5 L10 2 L18 8 C16 10 15 11 13 14 L7 17 Z" fill="#ececec" stroke="#c6c6c6" stroke-width="1" stroke-linejoin="round"/><path d="M5 10 L9 7 L13 10 L9 13 Z" fill="#f4f4f4" stroke="#cfcfcf"/></svg>
<svg class="a" style="left:852px;top:40px" width="19" height="19" viewBox="0 0 19 19"><path d="M2 6 L6 2 H12 V12 L8 16 H2 Z" fill="#ececec" stroke="#c6c6c6" stroke-width="1" stroke-linejoin="round"/><path d="M2 6 H8 V16 M8 6 L12 2" fill="none" stroke="#cfcfcf"/><path d="M15.5 4 V15 M13 12 L15.5 15 L18 12" fill="none" stroke="#bdbdbd" stroke-width="1.4"/></svg>
<svg class="a" style="left:852px;top:66px" width="19" height="19" viewBox="0 0 19 19"><path d="M2 8 L6 4 H12 V14 L8 18 H2 Z" fill="#ececec" stroke="#c6c6c6" stroke-width="1" stroke-linejoin="round"/><path d="M2 8 H8 V18 M8 8 L12 4 M2 12 H8" fill="none" stroke="#cfcfcf"/><path d="M15.5 1.5 V13 M13 10 L15.5 13 L18 10" fill="none" stroke="#bdbdbd" stroke-width="1.4"/></svg>
<svg class="a" style="left:852px;top:92px" width="19" height="19" viewBox="0 0 19 19"><path d="M1 5 L5.5 2 H17 V5.5 L12.5 8.5 H1 Z" fill="url(#gw)" stroke="#222" stroke-linejoin="round"/><path d="M1 10 L5.5 7 H17 V11 L12.5 14 H1 Z" fill="url(#gb)" stroke="#1d4f6f" stroke-width="1" stroke-linejoin="round"/><path d="M1 14 L5.5 11 H17 V14.5 L12.5 17.5 H1 Z" fill="url(#gw)" stroke="#222" stroke-linejoin="round"/></svg>
<svg class="a" style="left:1900px;top:99px" width="12" height="8" viewBox="0 0 12 8"><path d="M1.5 6.5 L6 2 L10.5 6.5" fill="none" stroke="#333" stroke-width="1.6"/></svg>
<div class="a" style="left:-1px;top:116px;width:61px;height:23px;background:#d9d9d9;border:1px solid #8f8f8f"></div>
<div class="t" style="left:-70.5px;width:200px;text-align:center;top:121.73px;font-size:11.8px;line-height:13.57px;color:#000;font-weight:normal;">Features</div>
<div class="a" style="left:59px;top:116px;width:57px;height:23px;background:#d9d9d9;border:1px solid #8f8f8f"></div>
<div class="t" style="left:-12.5px;width:200px;text-align:center;top:121.73px;font-size:11.8px;line-height:13.57px;color:#000;font-weight:normal;">Sketch</div>
<div class="t" style="left:48.5px;width:200px;text-align:center;top:121.73px;font-size:11.8px;line-height:13.57px;color:#000;font-weight:normal;-webkit-text-stroke:0.45px #000">Surfaces</div>
<div class="a" style="left:179px;top:116px;width:88px;height:23px;background:#d9d9d9;border:1px solid #8f8f8f"></div>
<div class="t" style="left:123.0px;width:200px;text-align:center;top:121.73px;font-size:11.8px;line-height:13.57px;color:#000;font-weight:normal;">Direct Editing</div>
<div class="a" style="left:266px;top:116px;width:61px;height:23px;background:#d9d9d9;border:1px solid #8f8f8f"></div>
<div class="t" style="left:196.5px;width:200px;text-align:center;top:121.73px;font-size:11.8px;line-height:13.57px;color:#000;font-weight:normal;">Evaluate</div>
<div class="a" style="left:326px;top:116px;width:134px;height:23px;background:#d9d9d9;border:1px solid #8f8f8f"></div>
<div class="t" style="left:293.0px;width:200px;text-align:center;top:121.73px;font-size:11.8px;line-height:13.57px;color:#000;font-weight:normal;">SOLIDWORKS Add-Ins</div>
<div class="a" style="left:0px;top:138px;width:460px;height:1px;background:#8f8f8f"></div>
<div class="a" style="left:0px;top:139px;width:243px;height:907px;background:#f5f5f5;border-right:1px solid #7d7d7d"></div>
<svg width="0" height="0" style="position:absolute"><defs><linearGradient id="gf" x1="0" y1="0" x2="0.3" y2="1"><stop offset="0" stop-color="#8fd0f0"/><stop offset="0.55" stop-color="#4a9ccc"/><stop offset="1" stop-color="#25709f"/></linearGradient></defs></svg>
<div class="a" style="left:0px;top:141px;width:240px;height:1px;background:#d4d4d4"></div>
<div class="a" style="left:0px;top:156px;width:240px;height:1px;background:#d4d4d4"></div>
<svg class="a" style="left:116px;top:145px" width="8" height="8" viewBox="0 0 8 8"><circle cx="4" cy="4" r="3" fill="#c8c8c8" stroke="#a8a8a8"/></svg>
<div class="a" style="left:39px;top:185px;width:201px;height:1px;background:#a9a9a9"></div>
<div class="a" style="left:39px;top:161px;width:41px;height:25px;background:#d6d6d6;border:1px solid #9a9a9a"></div>
<div class="a" style="left:79px;top:161px;width:41px;height:25px;background:#d6d6d6;border:1px solid #9a9a9a"></div>
<div class="a" style="left:119px;top:161px;width:41px;height:25px;background:#d6d6d6;border:1px solid #9a9a9a"></div>
<div class="a" style="left:159px;top:161px;width:41px;height:25px;background:#d6d6d6;border:1px solid #9a9a9a"></div>
<svg class="a" style="left:12px;top:164px" width="20" height="20" viewBox="0 0 20 20"><polygon points="5.5,5.7 8.5,7.4 4.2,9.8 1.3,8.1" fill="#f9e06a" stroke="#3a2e06" stroke-width="1" stroke-linejoin="round"/><polygon points="8.5,2.7 12.3,4.9 8.0,7.4 4.2,5.2" fill="#f9e06a" stroke="#3a2e06" stroke-width="1" stroke-linejoin="round"/><polygon points="12.3,9.6 16.5,12.0 12.3,14.5 8.0,12.0" fill="#f9e06a" stroke="#3a2e06" stroke-width="1" stroke-linejoin="round"/><polygon points="1.3,13.8 12.3,20.1 12.3,14.5 8.0,12.0 8.0,7.4 4.2,5.2 4.2,9.8 1.3,8.1" fill="#eac431" stroke="#3a2e06" stroke-width="1" stroke-linejoin="round"/><polygon points="12.3,9.6 12.3,4.9 8.0,7.4 8.0,12.0" fill="#d9b122" stroke="#3a2e06" stroke-width="1" stroke-linejoin="round"/><polygon points="16.5,17.7 16.5,12.0 12.3,14.5 12.3,20.1" fill="#d9b122" stroke="#3a2e06" stroke-width="1" stroke-linejoin="round"/></svg>
<svg class="a" style="left:50px;top:165px" width="19" height="18" viewBox="0 0 19 18"><rect x="0.8" y="0.8" width="17" height="16.5" rx="1" fill="#f4f4f4" stroke="#1e4d6b" stroke-width="1.2"/><rect x="0.8" y="0.8" width="17" height="2.6" fill="#3e88bd"/><rect x="3" y="5.5" width="3" height="2.3" fill="#3e88bd"/><rect x="3" y="9.5" width="3" height="2.3" fill="#3e88bd"/><rect x="3" y="13" width="3" height="2.3" fill="#3e88bd"/><path d="M7.5 6.7 H15.5 M7.5 10.7 H15.5 M7.5 14.2 H15.5" stroke="#222" stroke-width="1"/></svg>
<svg class="a" style="left:92px;top:165px" width="16" height="18" viewBox="0 0 16 18"><path d="M1.5 1 V17 M1.5 5 H5 M1.5 13 H5" stroke="#222" stroke-width="1.3" fill="none"/><rect x="6" y="1.5" width="7" height="6" rx="1" fill="#fff" stroke="#222"/><rect x="7.5" y="10" width="7" height="6.5" rx="1" fill="#fff" stroke="#222"/><path d="M9.5 7.5 V10" stroke="#222"/></svg>
<svg class="a" style="left:130px;top:164px" width="19" height="19" viewBox="0 0 19 19"><circle cx="9.5" cy="9.5" r="6" fill="none" stroke="#111" stroke-width="1.8"/><path d="M9.5 1 V18 M1 9.5 H18" stroke="#111" stroke-width="1.8"/></svg>
<svg class="a" style="left:171px;top:164px" width="19" height="19" viewBox="0 0 19 19"><circle cx="9.5" cy="9.5" r="8.8" fill="#d43a2a"/><path d="M9.5 9.5 L9.5 0.7 A8.8 8.8 0 0 0 0.7 9.5 Z" fill="#3b7fd0"/><path d="M9.5 9.5 L0.7 9.5 A8.8 8.8 0 0 0 9.5 18.3 Z" fill="#3aa83a"/><path d="M9.5 9.5 L9.5 18.3 A8.8 8.8 0 0 0 18.3 9.5 Z" fill="#f0c020"/><ellipse cx="13" cy="6" rx="2.2" ry="4" transform="rotate(-30 13 6)" fill="#222"/></svg>
<svg class="a" style="left:227px;top:167px" width="8" height="12" viewBox="0 0 8 12"><path d="M1.5 1.5 L6 6 L1.5 10.5" fill="none" stroke="#333" stroke-width="1.6"/></svg>
<div class="a" style="left:3px;top:188px;width:236px;height:25px;background:#f7f7f7;border:1px solid #cdcdcd"></div>
<svg class="a" style="left:6px;top:192px" width="17" height="19" viewBox="0 0 17 19"><path d="M1 1.5 H16 V3.5 L10 10 V18 L7 16 V10 L1 3.5 Z" fill="#f4f4f4" stroke="#333" stroke-width="1"/><rect x="1" y="1" width="15" height="2.6" fill="#3e88bd"/></svg>
<div class="t" style="left:25px;top:217.92px;font-size:11.7px;line-height:13.45px;color:#000;font-weight:normal;">Water Bottle (SSM) (Default) &lt;Blue&gt;</div>
<svg class="a" style="left:4px;top:215px" width="20" height="20" viewBox="0 0 20 20"><polygon points="5.5,5.7 8.5,7.4 4.2,9.8 1.3,8.1" fill="#f9e06a" stroke="#3a2e06" stroke-width="1" stroke-linejoin="round"/><polygon points="8.5,2.7 12.3,4.9 8.0,7.4 4.2,5.2" fill="#f9e06a" stroke="#3a2e06" stroke-width="1" stroke-linejoin="round"/><polygon points="12.3,9.6 16.5,12.0 12.3,14.5 8.0,12.0" fill="#f9e06a" stroke="#3a2e06" stroke-width="1" stroke-linejoin="round"/><polygon points="1.3,13.8 12.3,20.1 12.3,14.5 8.0,12.0 8.0,7.4 4.2,5.2 4.2,9.8 1.3,8.1" fill="#eac431" stroke="#3a2e06" stroke-width="1" stroke-linejoin="round"/><polygon points="12.3,9.6 12.3,4.9 8.0,7.4 8.0,12.0" fill="#d9b122" stroke="#3a2e06" stroke-width="1" stroke-linejoin="round"/><polygon points="16.5,17.7 16.5,12.0 12.3,14.5 12.3,20.1" fill="#d9b122" stroke="#3a2e06" stroke-width="1" stroke-linejoin="round"/></svg>
<div class="t" style="left:48px;top:239.82px;font-size:11.7px;line-height:13.45px;color:#000;font-weight:normal;">History</div>
<svg class="a" style="left:7px;top:241px" width="6" height="10" viewBox="0 0 6 10"><polygon points="1,1 5.5,5 1,9" fill="#555"/></svg>
<svg class="a" style="left:25px;top:238px" width="19" height="17" viewBox="0 0 19 17"><path d="M1.5 3.5 V1.5 H7 L8.5 3.5 H17.5 V16 H1.5 Z" fill="#f0f0f0" stroke="#333" stroke-width="1"/><path d="M1.5 4.5 H17.5" stroke="#888" stroke-width="0.8"/><circle cx="10.5" cy="10.5" r="4" fill="#fff" stroke="#222"/><path d="M4 10 A5 5 0 0 1 8 6" fill="none" stroke="#3e88bd" stroke-width="2"/><path d="M10.5 8 V10.5 H12.5" stroke="#222" fill="none"/></svg>
<div class="t" style="left:48px;top:261.82px;font-size:11.7px;line-height:13.45px;color:#000;font-weight:normal;">Sensors</div>
<svg class="a" style="left:25px;top:260px" width="19" height="17" viewBox="0 0 19 17"><path d="M1.5 3.5 V1.5 H7 L8.5 3.5 H17.5 V16 H1.5 Z" fill="#f0f0f0" stroke="#333" stroke-width="1"/><path d="M1.5 4.5 H17.5" stroke="#888" stroke-width="0.8"/><circle cx="10" cy="10.5" r="4.2" fill="#fff" stroke="#222" stroke-width="1.2"/><path d="M10 10.5 L13 8" stroke="#e03020" stroke-width="1.6"/></svg>
<div class="t" style="left:48px;top:283.82px;font-size:11.7px;line-height:13.45px;color:#000;font-weight:normal;">Annotations</div>
<svg class="a" style="left:7px;top:285px" width="6" height="10" viewBox="0 0 6 10"><polygon points="1,1 5.5,5 1,9" fill="#555"/></svg>
<svg class="a" style="left:25px;top:282px" width="19" height="17" viewBox="0 0 19 17"><path d="M1.5 3.5 V1.5 H7 L8.5 3.5 H17.5 V16 H1.5 Z" fill="#f0f0f0" stroke="#333" stroke-width="1"/><path d="M1.5 4.5 H17.5" stroke="#888" stroke-width="0.8"/><text x="9.5" y="15" text-anchor="middle" font-family="Liberation Serif" font-weight="bold" font-size="11" fill="#2f7fb8">A</text></svg>
<div class="t" style="left:48px;top:305.82px;font-size:11.7px;line-height:13.45px;color:#000;font-weight:normal;">Surface Bodies</div>
<svg class="a" style="left:25px;top:304px" width="19" height="17" viewBox="0 0 19 17"><path d="M1.5 3.5 V1.5 H7 L8.5 3.5 H17.5 V16 H1.5 Z" fill="#f0f0f0" stroke="#333" stroke-width="1"/><path d="M1.5 4.5 H17.5" stroke="#888" stroke-width="0.8"/><path d="M4 11 L10 6 L15 9 L9 14 Z" fill="#3e88bd" stroke="#1f4f6e" stroke-width="0.8"/></svg>
<div class="t" style="left:48px;top:327.82px;font-size:11.7px;line-height:13.45px;color:#000;font-weight:normal;">Solid Bodies(1)</div>
<svg class="a" style="left:5px;top:331px" width="10" height="7" viewBox="0 0 10 7"><polygon points="1,1 9,1 5,6" fill="#555"/></svg>
<svg class="a" style="left:25px;top:326px" width="19" height="17" viewBox="0 0 19 17"><path d="M1.5 3.5 V1.5 H7 L8.5 3.5 H17.5 V16 H1.5 Z" fill="#f0f0f0" stroke="#333" stroke-width="1"/><path d="M1.5 4.5 H17.5" stroke="#888" stroke-width="0.8"/><path d="M6 8 L10 6 L14 8 V13 L10 15 L6 13 Z" fill="#3e88bd" stroke="#1f4f6e" stroke-width="0.8"/></svg>
<div class="t" style="left:71px;top:349.82px;font-size:11.7px;line-height:13.45px;color:#000;font-weight:normal;">Intersect4</div>
<svg class="a" style="left:49px;top:347px" width="17" height="18" viewBox="0 0 17 18"><path d="M1 4 L8 1 L16 4 V14 L8 17 L1 14 Z" fill="#4d9fce" stroke="#1f4f6e" stroke-width="1"/><path d="M1 4 L8 7 L16 4 M8 7 V17" fill="none" stroke="#1f4f6e" stroke-width="0.8"/><path d="M1 4 L8 1 L16 4 L8 7 Z" fill="#8cc6e6"/></svg>
<div class="t" style="left:48px;top:371.82px;font-size:11.7px;line-height:13.45px;color:#000;font-weight:normal;">Equations</div>
<svg class="a" style="left:7px;top:373px" width="6" height="10" viewBox="0 0 6 10"><polygon points="1,1 5.5,5 1,9" fill="#555"/></svg>
<svg class="a" style="left:25px;top:370px" width="19" height="17" viewBox="0 0 19 17"><path d="M1.5 3.5 V1.5 H7 L8.5 3.5 H17.5 V16 H1.5 Z" fill="#f0f0f0" stroke="#333" stroke-width="1"/><path d="M1.5 4.5 H17.5" stroke="#888" stroke-width="0.8"/><path d="M13 7.5 V6.5 H6 L9.5 10 L6 13.5 H13 V12.5" fill="none" stroke="#222" stroke-width="1.2"/></svg>
<div class="t" style="left:48px;top:393.82px;font-size:11.7px;line-height:13.45px;color:#000;font-weight:normal;">Material &lt;not specified&gt;</div>
<svg class="a" style="left:24px;top:390px" width="20" height="19" viewBox="0 0 20 19"><circle cx="3" cy="3" r="2.2" fill="#fff" stroke="#555" stroke-width="0.8"/><circle cx="3" cy="9" r="2.2" fill="#5fb0e0" stroke="#555" stroke-width="0.8"/><circle cx="3" cy="15" r="2.2" fill="#f0c020" stroke="#555" stroke-width="0.8"/><path d="M6 3 H18 M6 9 H18 M6 15 H10" stroke="#333" stroke-width="1.4"/><circle cx="14" cy="15" r="3" fill="#222"/><circle cx="14" cy="15" r="4" fill="none" stroke="#222" stroke-width="1.2" stroke-dasharray="1.2 1"/></svg>
<div class="t" style="left:48px;top:415.82px;font-size:11.7px;line-height:13.45px;color:#000;font-weight:normal;">Front Plane</div>
<svg class="a" style="left:27px;top:413px" width="15" height="18" viewBox="0 0 15 18"><path d="M1.5 4 L13 1 V14 L1.5 17 Z" fill="#fafafa" stroke="#333" stroke-width="1"/><path d="M7.2 0.5 V18" stroke="#222" stroke-width="1.3" stroke-dasharray="2.5 1.5"/></svg>
<div class="t" style="left:48px;top:437.82px;font-size:11.7px;line-height:13.45px;color:#000;font-weight:normal;">Top Plane</div>
<svg class="a" style="left:27px;top:435px" width="15" height="18" viewBox="0 0 15 18"><path d="M1.5 4 L13 1 V14 L1.5 17 Z" fill="#fafafa" stroke="#333" stroke-width="1"/><path d="M7.2 0.5 V18" stroke="#222" stroke-width="1.3" stroke-dasharray="2.5 1.5"/></svg>
<div class="t" style="left:48px;top:459.82px;font-size:11.7px;line-height:13.45px;color:#000;font-weight:normal;">Right Plane</div>
<svg class="a" style="left:27px;top:457px" width="15" height="18" viewBox="0 0 15 18"><path d="M1.5 4 L13 1 V14 L1.5 17 Z" fill="#fafafa" stroke="#333" stroke-width="1"/><path d="M7.2 0.5 V18" stroke="#222" stroke-width="1.3" stroke-dasharray="2.5 1.5"/></svg>
<div class="t" style="left:48px;top:481.82px;font-size:11.7px;line-height:13.45px;color:#000;font-weight:normal;">Origin</div>
<svg class="a" style="left:24px;top:479px" width="20" height="18" viewBox="0 0 20 18"><path d="M3 1 V15 H18" fill="none" stroke="#111" stroke-width="1.5"/><polygon points="0.5,4 3,0 5.5,4" fill="#111"/><polygon points="15,12.5 19,15 15,17.5" fill="#111"/></svg>
<div class="t" style="left:48px;top:503.82px;font-size:11.7px;line-height:13.45px;color:#000;font-weight:normal;">Reference Geometry</div>
<svg class="a" style="left:7px;top:505px" width="6" height="10" viewBox="0 0 6 10"><polygon points="1,1 5.5,5 1,9" fill="#555"/></svg>
<svg class="a" style="left:25px;top:502px" width="19" height="17" viewBox="0 0 19 17"><path d="M1 2 H7 L8.5 4 H18 V16.5 H1 Z" fill="url(#gf)" stroke="#1a4a68" stroke-width="1" stroke-linejoin="round"/><path d="M1.5 5.5 H17.5" stroke="#9ad2ee" stroke-width="1"/></svg>
<div class="t" style="left:48px;top:525.82px;font-size:11.7px;line-height:13.45px;color:#000;font-weight:normal;">Body</div>
<svg class="a" style="left:7px;top:527px" width="6" height="10" viewBox="0 0 6 10"><polygon points="1,1 5.5,5 1,9" fill="#555"/></svg>
<svg class="a" style="left:25px;top:524px" width="19" height="17" viewBox="0 0 19 17"><path d="M1 2 H7 L8.5 4 H18 V16.5 H1 Z" fill="url(#gf)" stroke="#1a4a68" stroke-width="1" stroke-linejoin="round"/><path d="M1.5 5.5 H17.5" stroke="#9ad2ee" stroke-width="1"/></svg>
<div class="t" style="left:48px;top:547.82px;font-size:11.7px;line-height:13.45px;color:#000;font-weight:normal;">Thread</div>
<svg class="a" style="left:7px;top:549px" width="6" height="10" viewBox="0 0 6 10"><polygon points="1,1 5.5,5 1,9" fill="#555"/></svg>
<svg class="a" style="left:25px;top:546px" width="19" height="17" viewBox="0 0 19 17"><path d="M1 2 H7 L8.5 4 H18 V16.5 H1 Z" fill="url(#gf)" stroke="#1a4a68" stroke-width="1" stroke-linejoin="round"/><path d="M1.5 5.5 H17.5" stroke="#9ad2ee" stroke-width="1"/></svg>
<div class="t" style="left:48px;top:569.82px;font-size:11.7px;line-height:13.45px;color:#000;font-weight:normal;">Volume Window</div>
<svg class="a" style="left:7px;top:571px" width="6" height="10" viewBox="0 0 6 10"><polygon points="1,1 5.5,5 1,9" fill="#555"/></svg>
<svg class="a" style="left:25px;top:568px" width="19" height="17" viewBox="0 0 19 17"><path d="M1 2 H7 L8.5 4 H18 V16.5 H1 Z" fill="url(#gf)" stroke="#1a4a68" stroke-width="1" stroke-linejoin="round"/><path d="M1.5 5.5 H17.5" stroke="#9ad2ee" stroke-width="1"/></svg>
<div class="t" style="left:48px;top:591.82px;font-size:11.7px;line-height:13.45px;color:#000;font-weight:normal;">Fill Level</div>
<svg class="a" style="left:26px;top:589px" width="16" height="18" viewBox="0 0 16 18"><path d="M1.5 4 L14 1 V14 L1.5 17 Z" fill="url(#gb)" stroke="#1a4a68" stroke-width="1"/><path d="M7.5 1 V18" stroke="#1d3f56" stroke-dasharray="2 1.3"/></svg>
<div class="t" style="left:48px;top:613.82px;font-size:11.7px;line-height:13.45px;color:#000;font-weight:normal;">Intersect4</div>
<svg class="a" style="left:23px;top:610px" width="21" height="20" viewBox="0 0 21 20"><path d="M1 9 L10 6 V17 L1 20 Z" fill="url(#gf)" stroke="#1a4a68" stroke-width="1"/><path d="M6 5 L12 2 L19 4.5 V12.5 L13 15.5 L6 13 Z" fill="url(#gw)" stroke="#222" stroke-width="1" stroke-linejoin="round"/><path d="M6 5 L13 7.5 L19 4.5 M13 7.5 V15.5" fill="none" stroke="#222" stroke-width="0.9"/></svg>
<div class="a" style="left:0px;top:631px;width:240px;height:3px;background:#2e86c8"></div>
<div class="a" style="left:242px;top:562px;width:9px;height:39px;background:#f5f5f5;border:1px solid #7d7d7d;border-left:none"></div>
<svg class="a" style="left:243px;top:578px" width="7" height="7" viewBox="0 0 7 7"><circle cx="3.5" cy="3.5" r="2.5" fill="#e0e0e0" stroke="#9a9a9a"/></svg>
<svg class="a" style="left:1790px;top:125px" width="13" height="14" viewBox="0 0 13 14"><rect x="0.5" y="0.5" width="11.5" height="13" fill="none" stroke="#8c8c8c"/><rect x="0.5" y="0.5" width="11.5" height="1.5" fill="#8c8c8c"/><polygon points="2.5,7 6,4.5 6,9.5" fill="#8c8c8c"/></svg>
<svg class="a" style="left:1816px;top:125px" width="13" height="14" viewBox="0 0 13 14"><rect x="0.5" y="0.5" width="11.5" height="13" fill="none" stroke="#8c8c8c"/><rect x="0.5" y="0.5" width="11.5" height="1.5" fill="#8c8c8c"/><polygon points="10,7 6.5,4.5 6.5,9.5" fill="#8c8c8c"/></svg>
<div class="a" style="left:1843px;top:136px;width:10px;height:2px;background:#8c8c8c"></div>
<svg class="a" style="left:1867px;top:125px" width="15" height="14" viewBox="0 0 15 14"><rect x="5" y="0.5" width="9.5" height="8" fill="none" stroke="#8c8c8c"/><rect x="5" y="0.5" width="9.5" height="1.5" fill="#8c8c8c"/><rect x="0.5" y="5" width="9.5" height="8.5" fill="#fff" stroke="#8c8c8c"/><rect x="0.5" y="5" width="9.5" height="1.5" fill="#8c8c8c"/></svg>
<svg class="a" style="left:1894px;top:126px" width="12" height="12" viewBox="0 0 12 12"><path d="M1 1 L11 11 M11 1 L1 11" stroke="#8c8c8c" stroke-width="1.2"/></svg>
<div class="a" style="left:1919px;top:117px;width:1px;height:929px;background:#c8c8c8"></div>
<svg class="a" style="left:904px;top:122px" width="19" height="19" viewBox="0 0 19 19"><circle cx="11.5" cy="7.5" r="6.5" fill="#eef3f7" stroke="#555" stroke-width="1.2"/><path d="M6 13 L1.5 17.5" stroke="#3f8fc0" stroke-width="3"/><path d="M11.5 3 L10 5 H13 Z M11.5 12 L10 10 H13 Z M7 7.5 L9 6 V9 Z M16 7.5 L14 6 V9 Z" fill="#555"/></svg>
<svg class="a" style="left:929px;top:122px" width="21" height="19" viewBox="0 0 21 19"><rect x="7.5" y="1" width="12" height="11" fill="none" stroke="#444" stroke-dasharray="2 1.5"/><circle cx="11.5" cy="8" r="6" fill="#e4edf3" stroke="#555" stroke-width="1.2"/><path d="M6 13 L1.5 17.5" stroke="#3f8fc0" stroke-width="3"/></svg>
<svg class="a" style="left:957px;top:122px" width="19" height="19" viewBox="0 0 19 19"><path d="M2 11 L12 2 L17 6 L8 16 Z" fill="#e0e0e0" stroke="#777" stroke-width="1"/><path d="M8 14 H17 M11 11 L8 14 L11 17" fill="none" stroke="#3f8fc0" stroke-width="2"/></svg>
<svg class="a" style="left:983px;top:122px" width="18" height="19" viewBox="0 0 18 19"><path d="M1 4 C4 1 14 1 17 4 V17 C14 14 4 14 1 17 Z" fill="#d6dde3" stroke="#444"/><rect x="2" y="6" width="4" height="10" fill="#3f8fc0"/><rect x="12" y="6" width="4" height="10" fill="#3f8fc0"/></svg>
<svg class="a" style="left:1007px;top:122px" width="20" height="19" viewBox="0 0 20 19"><path d="M3 11 L13 3 L17 6 L8 15 Z" fill="#e0e0e0" stroke="#777"/><path d="M7 1 L4 7 H8 L5 12" fill="none" stroke="#e8901a" stroke-width="1.8"/><text x="14" y="18.5" font-family="Liberation Sans" font-size="10" font-weight="bold" fill="#3f8fc0">A</text></svg>
<svg class="a" style="left:1034px;top:122px" width="19" height="19" viewBox="0 0 19 19"><path d="M1 5 L5 1 H18 V14 L14 18 H1 Z" fill="#f4f4f4" stroke="#444"/><rect x="1" y="5" width="13" height="13" fill="#7fbde0" stroke="#444"/><path d="M14 5 L18 1" stroke="#444"/></svg>
<svg class="a" style="left:1060.0px;top:130px" width="6" height="4" viewBox="0 0 6 4"><polygon points="0,0 6,0 3.0,4" fill="#999"/></svg>
<svg class="a" style="left:1076px;top:122px" width="17" height="19" viewBox="0 0 17 19"><path d="M1 4 L6 1 L16 3 V15 L11 18 L1 16 Z" fill="#fff" stroke="#555"/><path d="M1 4 L11 6 V18 L1 16 Z" fill="#8ec9ea" stroke="#555"/><path d="M11 6 L16 3" stroke="#555"/></svg>
<svg class="a" style="left:1100.0px;top:130px" width="6" height="4" viewBox="0 0 6 4"><polygon points="0,0 6,0 3.0,4" fill="#999"/></svg>
<svg class="a" style="left:1115px;top:124px" width="18" height="16" viewBox="0 0 18 16"><path d="M1 8 C4 2 14 2 17 8 C14 14 4 14 1 8 Z" fill="#e6e6e6" stroke="#888"/><circle cx="9" cy="8" r="3.8" fill="#777"/><path d="M9 1 V16" stroke="#444" stroke-width="1"/></svg>
<svg class="a" style="left:1140.5px;top:130px" width="6" height="4" viewBox="0 0 6 4"><polygon points="0,0 6,0 3.0,4" fill="#999"/></svg>
<svg class="a" style="left:1155px;top:122px" width="20" height="20" viewBox="0 0 20 20"><circle cx="9" cy="9" r="8.5" fill="#d43a2a"/><path d="M9 9 L9 0.5 A8.5 8.5 0 0 0 0.5 9 Z" fill="#3b7fd0"/><path d="M9 9 L0.5 9 A8.5 8.5 0 0 0 9 17.5 Z" fill="#3aa83a"/><path d="M9 9 L9 17.5 A8.5 8.5 0 0 0 17.5 9 Z" fill="#f0c020"/><path d="M10 17 L17 9 L19.5 11 L12.5 19 L9.5 19.5 Z" fill="#f0c020" stroke="#555" stroke-width="0.8"/></svg>
<svg class="a" style="left:1180px;top:121px" width="20" height="20" viewBox="0 0 20 20"><circle cx="9" cy="9" r="8.5" fill="#d43a2a"/><path d="M9 9 L9 0.5 A8.5 8.5 0 0 0 0.5 9 Z" fill="#3b7fd0"/><path d="M9 9 L0.5 9 A8.5 8.5 0 0 0 9 17.5 Z" fill="#3aa83a"/><path d="M9 9 L9 17.5 A8.5 8.5 0 0 0 17.5 9 Z" fill="#f0c020"/><rect x="0" y="13" width="18" height="6" fill="#222"/><path d="M2 14 H4 V18 H2 Z M7 14 H9 V18 H7 Z M12 14 H14 V18 H12 Z" fill="#fff"/></svg>
<svg class="a" style="left:1206.0px;top:130px" width="6" height="4" viewBox="0 0 6 4"><polygon points="0,0 6,0 3.0,4" fill="#999"/></svg>
<svg class="a" style="left:1220px;top:123px" width="20" height="18" viewBox="0 0 20 18"><rect x="1" y="1" width="18" height="12" fill="#e8e8e8" stroke="#555"/><path d="M10 13 V16 M6 17 H14" stroke="#333" stroke-width="1.5"/></svg>
<svg class="a" style="left:1246.5px;top:130px" width="6" height="4" viewBox="0 0 6 4"><polygon points="0,0 6,0 3.0,4" fill="#999"/></svg>
<div class="a" style="left:1894px;top:168px;width:27px;height:25px;background:#d5d5d5;border:1px solid #9b9b9b"></div>
<div class="a" style="left:1894px;top:192px;width:27px;height:25px;background:#d5d5d5;border:1px solid #9b9b9b"></div>
<div class="a" style="left:1894px;top:216px;width:27px;height:25px;background:#d5d5d5;border:1px solid #9b9b9b"></div>
<div class="a" style="left:1894px;top:240px;width:27px;height:25px;background:#d5d5d5;border:1px solid #9b9b9b"></div>
<div class="a" style="left:1894px;top:264px;width:27px;height:25px;background:#f7f7f7;border:1px solid #9b9b9b"></div>
<div class="a" style="left:1894px;top:288px;width:27px;height:25px;background:#d5d5d5;border:1px solid #9b9b9b"></div>
<div class="a" style="left:1894px;top:312px;width:27px;height:25px;background:#d5d5d5;border:1px solid #9b9b9b"></div>
<div class="a" style="left:1894px;top:336px;width:27px;height:25px;background:#d5d5d5;border:1px solid #9b9b9b"></div>
<div class="a" style="left:1894px;top:360px;width:27px;height:25px;background:#d5d5d5;border:1px solid #9b9b9b"></div>
<svg class="a" style="left:1897px;top:171px" width="20" height="19" viewBox="0 0 20 19"><path d="M1.5 9 L10 2 L18.5 9" fill="none" stroke="#2f6e9a" stroke-width="2.2"/><path d="M4 8 V17.5 H16 V8" fill="#fafafa" stroke="#333" stroke-width="1.2"/><rect x="8" y="11" width="4.5" height="6.5" fill="#fff" stroke="#333"/></svg>
<svg class="a" style="left:1899px;top:194px" width="16" height="19" viewBox="0 0 16 19"><path d="M1 4 L4 2 V17 L1 18 Z M5 3 L8 1 V16 L5 17 Z M9 3 L12 1 V16 L9 17 Z" fill="#fff" stroke="#333" stroke-width="1"/></svg>
<svg class="a" style="left:1897px;top:219px" width="20" height="17" viewBox="0 0 20 17"><path d="M1 1.5 H7 L9 3.5 H16 V6 H5 L1 16 Z" fill="#ddd" stroke="#333"/><path d="M5 6 H19 L16 16 H1 Z" fill="#f4f4f4" stroke="#333"/></svg>
<svg class="a" style="left:1898px;top:242px" width="18" height="18" viewBox="0 0 18 18"><rect x="0.8" y="0.8" width="16.5" height="16.5" fill="#fff" stroke="#333" stroke-width="1.1"/><rect x="3" y="3" width="8" height="3" fill="#f3c520"/><rect x="12.5" y="3" width="3" height="3" fill="#f3c520"/><path d="M3 13 H11 V11 H8 V8 H6 V11 H3 Z" fill="#f3c520"/><rect x="12.5" y="9" width="3" height="6" fill="#ccc" stroke="#555" stroke-width="0.6"/></svg>
<svg class="a" style="left:1898px;top:267px" width="20" height="20" viewBox="0 0 20 20"><circle cx="9" cy="9" r="8.5" fill="#d43a2a"/><path d="M9 9 L9 0.5 A8.5 8.5 0 0 0 0.5 9 Z" fill="#3b7fd0"/><path d="M9 9 L0.5 9 A8.5 8.5 0 0 0 9 17.5 Z" fill="#3aa83a"/><path d="M9 9 L9 17.5 A8.5 8.5 0 0 0 17.5 9 Z" fill="#f0c020"/></svg>
<svg class="a" style="left:1898px;top:291px" width="18" height="18" viewBox="0 0 18 18"><rect x="0.8" y="0.8" width="16.5" height="16.5" fill="#f4f4f4" stroke="#1e4d6b" stroke-width="1.2"/><rect x="0.8" y="0.8" width="16.5" height="2.6" fill="#3e88bd"/><rect x="3" y="5.5" width="3" height="2.3" fill="#3e88bd"/><rect x="3" y="9.5" width="3" height="2.3" fill="#3e88bd"/><rect x="3" y="13" width="3" height="2.3" fill="#3e88bd"/><path d="M7.5 6.7 H15 M7.5 10.7 H15 M7.5 14.2 H15" stroke="#222"/></svg>
<svg class="a" style="left:1898px;top:315px" width="19" height="18" viewBox="0 0 19 18"><rect x="0.8" y="0.8" width="14" height="11" fill="#f4f4f4" stroke="#333"/><rect x="2.5" y="3" width="10" height="2" fill="#3e88bd"/><path d="M7 11 L12 8 L18 10 V15 L12 17.5 L7 15 Z" fill="#f3c520" stroke="#555" stroke-width="0.8"/><rect x="11" y="7" width="5" height="5" fill="#4d9fce"/></svg>
<svg class="a" style="left:1898px;top:339px" width="19" height="18" viewBox="0 0 19 18"><ellipse cx="7" cy="3" rx="6" ry="2.2" fill="#f4f4f4" stroke="#333"/><path d="M1 3 V15 C1 17.5 13 17.5 13 15 V3" fill="#eee" stroke="#333"/><path d="M1 7 C1 9.5 13 9.5 13 7 M1 11 C1 13.5 13 13.5 13 11" fill="none" stroke="#333"/><path d="M18 7 H11 M13 5 L11 7 L13 9 M10 13 H18 M16 11 L18 13 L16 15" fill="none" stroke="#2f7fb8" stroke-width="1.7"/></svg>
<svg class="a" style="left:1897px;top:363px" width="20" height="18" viewBox="0 0 20 18"><path d="M2 5 L9 2 L17 5 V14 L9 17 L2 14 Z" fill="#d43030" stroke="#777"/><circle cx="8" cy="9.5" r="4" fill="#fff"/><text x="8" y="12.5" text-anchor="middle" font-size="7" font-weight="bold" fill="#d43030" font-family="Liberation Sans">$</text><circle cx="14.5" cy="14" r="2.5" fill="none" stroke="#2f7fb8" stroke-width="1.5"/><path d="M16 16 L18.5 18.5" stroke="#2f7fb8" stroke-width="1.6"/></svg>
<svg class="a" style="left:255px;top:950px" width="60" height="55" viewBox="0 0 60 55"><path d="M28 42 V20" stroke="#0b7a10" stroke-width="4"/><polygon points="24,22 28,14 32,22" fill="#0b7a10"/>
<path d="M28 42 L12 49" stroke="#1010b0" stroke-width="4"/><polygon points="8,51 17,44 16,52" fill="#1010b0"/>
<path d="M28 42 L45 49" stroke="#b01010" stroke-width="4"/><polygon points="49,51 40,44 41,52" fill="#b01010"/>
<text x="28" y="9" text-anchor="middle" font-size="7" fill="#2aa030" font-family="Liberation Sans">Y</text>
<text x="3" y="52" font-size="7" fill="#5050e0" font-family="Liberation Sans">Z</text>
<text x="51" y="52" font-size="7" fill="#e04040" font-family="Liberation Sans">X</text></svg>
<div class="t" style="left:254px;top:1029.88px;font-size:12.5px;line-height:14.37px;color:#000;font-weight:bold;letter-spacing:0.4px">*Isometric</div>
<div class="a" style="left:243px;top:1046px;width:1677px;height:16px;background:#f5f5f5;border-top:1px solid #9c9c9c"></div>
<div class="a" style="left:0px;top:1046px;width:243px;height:16px;background:#f5f5f5;border-top:1px solid #f5f5f5"></div>
<div class="a" style="left:0px;top:1061px;width:1920px;height:19px;background:#f5f5f5;border-top:1px solid #a5a5a5"></div>
<div class="a" style="left:0px;top:1046px;width:67px;height:16px;background:#a8a8a8;border-top:2px solid #444"></div>
<div class="a" style="left:2px;top:1048px;width:14px;height:13px;background:#b7b7b7;border:1px solid #9a9a9a"></div>
<div class="a" style="left:18px;top:1048px;width:14px;height:13px;background:#b7b7b7;border:1px solid #9a9a9a"></div>
<div class="a" style="left:34px;top:1048px;width:14px;height:13px;background:#b7b7b7;border:1px solid #9a9a9a"></div>
<div class="a" style="left:50px;top:1048px;width:14px;height:13px;background:#b7b7b7;border:1px solid #9a9a9a"></div>
<svg class="a" style="left:0px;top:1049px" width="67" height="11" viewBox="0 0 67 11"><polygon points="9,5.5 13,2 13,9" fill="#999"/><rect x="6" y="2" width="1.5" height="7" fill="#999"/><polygon points="23,5.5 27,2 27,9" fill="#999"/><polygon points="45,5.5 41,2 41,9" fill="#999"/><polygon points="58,5.5 54,2 54,9" fill="#999"/><rect x="60" y="2" width="1.5" height="7" fill="#999"/></svg>
<div class="a" style="left:123px;top:1046px;width:69px;height:16px;background:#d6d6d6;border:1px solid #8e8e8e"></div>
<div class="a" style="left:191px;top:1046px;width:109px;height:16px;background:#d6d6d6;border:1px solid #8e8e8e"></div>
<div class="t" style="left:79px;top:1047.84px;font-size:12px;line-height:13.8px;color:#000;font-weight:bold;">Model</div>
<div class="t" style="left:57px;width:200px;text-align:center;top:1047.84px;font-size:12px;line-height:13.8px;color:#000;font-weight:normal;">3D Views</div>
<div class="t" style="left:145.5px;width:200px;text-align:center;top:1047.84px;font-size:12px;line-height:13.8px;color:#000;font-weight:normal;">Motion Study 1</div>
<div class="t" style="left:1px;top:1066.06px;font-size:11px;line-height:12.65px;color:#000;font-weight:normal;">SOLIDWORKS</div>
<div class="t" style="left:1635px;top:1065.61px;font-size:11.5px;line-height:13.22px;color:#000;font-weight:normal;">Editing Part</div>
<div class="t" style="left:1811px;top:1065.61px;font-size:11.5px;line-height:13.22px;color:#000;font-weight:normal;">Custom</div>
<svg class="a" style="left:1866px;top:1068px" width="8" height="5" viewBox="0 0 8 5"><polygon points="0,5 4,0 8,5" fill="#444"/></svg>
<svg class="a" style="left:1900px;top:1064px" width="18" height="15" viewBox="0 0 18 15"><path d="M1 7 L9 2 L17 7 V10 L9 14 L1 10 Z" fill="#eee" stroke="#333"/><path d="M1 7 L9 11 L17 7 M9 11 V14" fill="none" stroke="#333"/><circle cx="10" cy="6" r="1.8" fill="none" stroke="#333"/></svg>
</body></html>
